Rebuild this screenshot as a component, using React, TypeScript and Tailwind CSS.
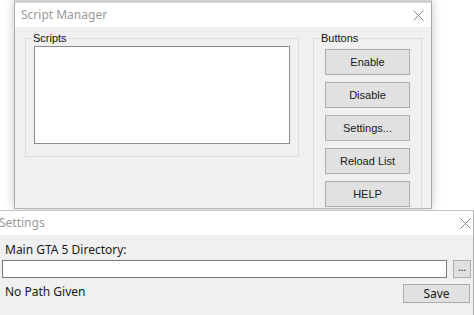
import type { ReactNode } from 'react';

const uiFont = { fontFamily: '"Noto Sans", "Open Sans", sans-serif' };
const formFont = { fontFamily: '"Liberation Sans", Arial, sans-serif' };

function CloseGlyph({ className }: { className?: string }) {
  return (
    <svg width="11" height="11" viewBox="0 0 11 11" className={className}>
      <path d="M0.5 0.5L10.5 10.5M10.5 0.5L0.5 10.5" stroke="#8a8a8a" strokeWidth="1" fill="none" />
    </svg>
  );
}

function WinButton({ label, className }: { label: string; className?: string }) {
  return (
    <button
      type="button"
      className={`flex items-center justify-center border border-[#adadad] bg-[#e1e1e1] text-[#1a1a1a] ${className ?? ''}`}
    >
      {label}
    </button>
  );
}

function GroupBox({ label, className, children }: { label: string; className?: string; children: ReactNode }) {
  return (
    <div className={`relative border border-[#dcdcdc] ${className ?? ''}`}>
      <span className="absolute -top-[8px] left-[6px] bg-[#f0f0f0] px-[1px] text-[11px] leading-[14px] text-[#111]">
        {label}
      </span>
      {children}
    </div>
  );
}

export default function App() {
  return (
    <div className="relative h-[315px] w-[474px] overflow-hidden bg-white">
      {/* Script Manager window */}
      <div
        className="absolute left-[14px] top-0 flex h-[209px] w-[418px] flex-col overflow-hidden border-x border-b border-t-[3px] border-x-[#a8a8a8] border-b-[#b8b8b8] border-t-[#cfcfcf] bg-[#f0f0f0] shadow-[0_0_10px_rgba(0,0,0,0.22)]"
        style={formFont}
      >
        <div className="flex h-[24px] shrink-0 items-center justify-between bg-white pl-[6px] pr-[7px]">
          <span className="text-[12px] text-[#9a9a9a]" style={uiFont}>
            Script Manager
          </span>
          <CloseGlyph />
        </div>
        <div className="flex gap-[14px] pl-[10px] pt-[11px]">
          <GroupBox label="Scripts" className="h-[119px] w-[274px] pl-[8px] pt-[7px]">
            <div className="h-[98px] w-[256px] border border-[#8c8c8c] bg-white" />
          </GroupBox>
          <GroupBox label="Buttons" className="h-[190px] w-[109px] pl-[11px] pt-[10px]">
            <div className="flex flex-col gap-[7px] text-[11px]">
              <WinButton label="Enable" className="h-[26px] w-[85px]" />
              <WinButton label="Disable" className="h-[26px] w-[85px]" />
              <WinButton label="Settings..." className="h-[26px] w-[85px]" />
              <WinButton label="Reload List" className="h-[26px] w-[85px]" />
              <WinButton label="HELP" className="h-[26px] w-[85px]" />
            </div>
          </GroupBox>
        </div>
      </div>

      {/* Settings window */}
      <div
        className="absolute left-0 top-[210px] flex h-[105px] w-[474px] flex-col border-r border-t border-r-[#b0b0b0] border-t-[#c4c4c4] bg-[#f0f0f0]"
        style={uiFont}
      >
        <div className="flex h-[24px] shrink-0 items-center justify-between bg-white pr-[2px]">
          <span className="-ml-[1px] text-[12px] text-[#9a9a9a]">Settings</span>
          <CloseGlyph />
        </div>
        <div className="flex flex-col pl-[2px] pr-[2px] pt-[6px] text-[12px] text-[#1a1a1a]">
          <span className="pl-[3px] leading-[17px]">Main GTA 5 Directory:</span>
          <div className="mt-[2px] flex items-center gap-[6px]">
            <div className="h-[18px] w-[445px] border border-[#7a7a7a] bg-white" />
            <WinButton label="..." className="h-[18px] w-[18px] pb-[4px] text-[10px]" />
          </div>
          <div className="mt-[6px] flex items-start justify-between">
            <span className="pl-[3px] leading-[16px]">No Path Given</span>
            <WinButton label="Save" className="mr-[1px] h-[19px] w-[67px]" />
          </div>
        </div>
      </div>
    </div>
  );
}
